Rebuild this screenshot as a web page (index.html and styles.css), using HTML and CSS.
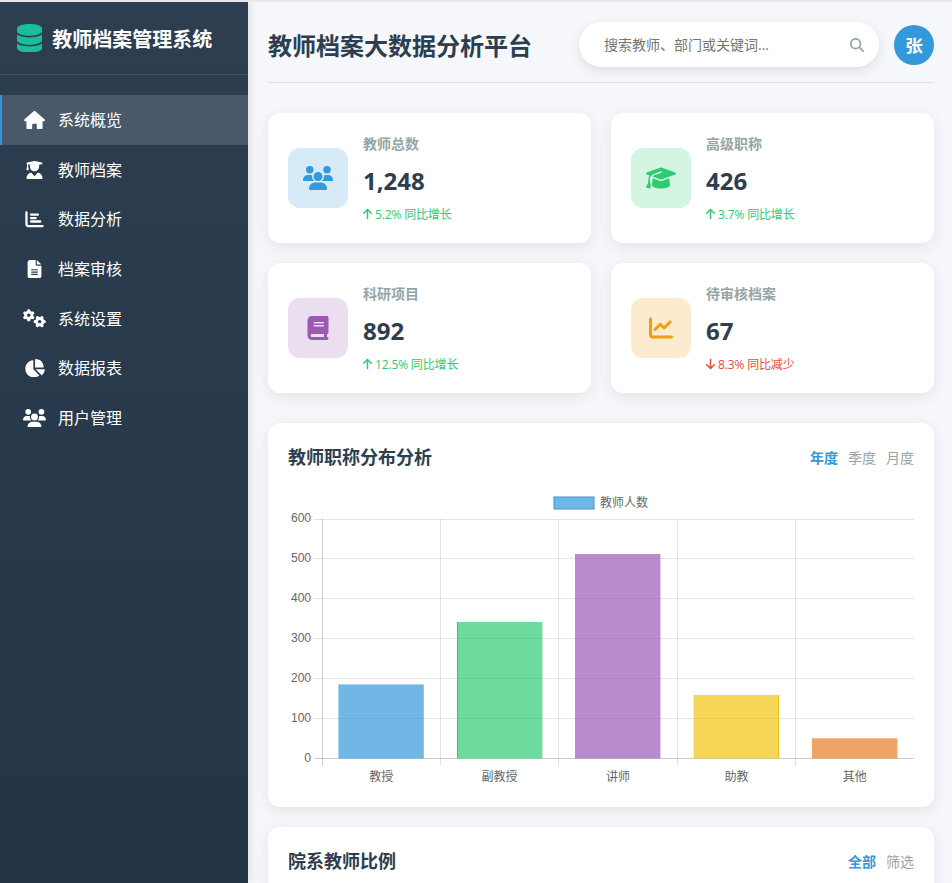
FILE: index.html
```html
<!DOCTYPE html>
<html lang="zh-CN">

<head>
    <meta charset="UTF-8">
    <meta name="viewport" content="width=device-width, initial-scale=1.0">
    <title>教师档案管理系统</title>
    <link rel="stylesheet" href="styles.css">
</head>

<body>
    <svg class="sprite" xmlns="http://www.w3.org/2000/svg">
        <symbol id="i-users" viewBox="0 0 640 512"><path d="M144 0a80 80 0 1 1 0 160A80 80 0 1 1 144 0zM512 0a80 80 0 1 1 0 160A80 80 0 1 1 512 0zM0 298.7C0 239.8 47.8 192 106.7 192h42.7c15.9 0 31 3.5 44.6 9.7c-1.3 7.2-1.9 14.7-1.9 22.3c0 38.2 16.8 72.5 43.3 96c-.2 0-.4 0-.7 0H21.3C9.6 320 0 310.4 0 298.7zM405.3 320c-.2 0-.4 0-.7 0c26.6-23.5 43.3-57.8 43.3-96c0-7.6-.7-15-1.9-22.3c13.6-6.3 28.7-9.7 44.6-9.7h42.7C592.2 192 640 239.8 640 298.7c0 11.8-9.6 21.3-21.3 21.3H405.3zM224 224a96 96 0 1 1 192 0 96 96 0 1 1 -192 0zM128 485.3C128 411.7 187.7 352 261.3 352H378.7C452.3 352 512 411.7 512 485.3c0 14.7-11.9 26.7-26.7 26.7H154.7c-14.7 0-26.7-11.9-26.7-26.7z"/></symbol>
        <symbol id="i-up" viewBox="0 0 384 512"><path d="M214.6 41.4c-12.5-12.5-32.8-12.5-45.3 0l-160 160c-12.5 12.5-12.5 32.8 0 45.3s32.8 12.5 45.3 0L160 141.2V448c0 17.7 14.3 32 32 32s32-14.3 32-32V141.2L329.4 246.6c12.5 12.5 32.8 12.5 45.3 0s12.5-32.8 0-45.3l-160-160z"/></symbol>
        <symbol id="i-down" viewBox="0 0 384 512"><path d="M169.4 470.6c12.5 12.5 32.8 12.5 45.3 0l160-160c12.5-12.5 12.5-32.8 0-45.3s-32.8-12.5-45.3 0L224 370.8 224 64c0-17.7-14.3-32-32-32s-32 14.3-32 32l0 306.7L54.6 265.4c-12.5-12.5-32.8-12.5-45.3 0s-12.5 32.8 0 45.3l160 160z"/></symbol>
    </svg>

    <aside class="sidebar">
        <div class="logo">
            <svg class="logo-icon" viewBox="0 0 448 512"><path d="M448 80v48c0 44.2-100.3 80-224 80S0 172.2 0 128V80C0 35.8 100.3 0 224 0S448 35.8 448 80zM393.2 214.7c20.8-7.4 39.9-16.9 54.8-28.6V288c0 44.2-100.3 80-224 80S0 332.2 0 288V186.1c14.9 11.8 34 21.2 54.8 28.6C99.7 230.7 159.5 240 224 240s124.3-9.3 169.2-25.3zM0 346.1c14.9 11.8 34 21.2 54.8 28.6C99.7 390.7 159.5 400 224 400s124.3-9.3 169.2-25.3c20.8-7.4 39.9-16.9 54.8-28.6V432c0 44.2-100.3 80-224 80S0 476.2 0 432V346.1z"/></svg>
            <span>教师档案管理系统</span>
        </div>
        <nav class="nav">
            <a class="nav-item active">
                <span class="nav-icon"><svg viewBox="0 0 576 512"><path d="M575.8 255.5c0 18-15 32.1-32 32.1h-32l.7 160.2c0 2.7-.2 5.4-.5 8.1V472c0 22.1-17.9 40-40 40H456c-1.1 0-2.2 0-3.3-.1c-1.4 .1-2.8 .1-4.2 .1H416 392c-22.1 0-40-17.9-40-40V448 384c0-17.7-14.3-32-32-32H256c-17.7 0-32 14.3-32 32v64 24c0 22.1-17.9 40-40 40H160 128.1c-1.5 0-3-.1-4.5-.2c-1.2 .1-2.4 .2-3.6 .2H104c-22.1 0-40-17.9-40-40V360c0-.9 0-1.9 .1-2.8V287.6H32c-18 0-32-14-32-32.1c0-9 3-17 10-24L266.4 8c7-7 15-8 22-8s15 2 21 7L564.8 231.5c8 7 12 15 11 24z"/></svg></span>
                <span class="nav-text">系统概览</span>
            </a>
            <a class="nav-item">
                <span class="nav-icon"><svg viewBox="0 0 448 512"><path d="M219.3 .5c3.1-.6 6.3-.6 9.4 0l200 40C439.9 42.7 448 52.6 448 64s-8.1 21.3-19.3 23.5L352 102.9V160c0 70.7-57.3 128-128 128s-128-57.3-128-128V102.9L48 93.3v65.1l15.7 78.4c.9 4.7-.3 9.6-3.3 13.3s-7.6 5.9-12.4 5.9H16c-4.8 0-9.3-2.1-12.4-5.9s-4.3-8.6-3.3-13.3L16 158.4V86.6C6.5 83.3 0 74.3 0 64C0 52.6 8.1 42.7 19.3 40.5l200-40zM111.9 327.7c10.5-3.4 21.8 .4 29.4 8.5l71 75.5c6.3 6.7 17 6.7 23.3 0l71-75.5c7.6-8.1 18.9-11.9 29.4-8.5C401 348.6 448 409.4 448 481.3c0 17-13.8 30.7-30.7 30.7H30.7C13.8 512 0 498.2 0 481.3c0-71.9 47-132.7 111.9-153.6z"/></svg></span>
                <span class="nav-text">教师档案</span>
            </a>
            <a class="nav-item">
                <span class="nav-icon"><svg viewBox="0 0 512 512"><path d="M32 32c17.7 0 32 14.3 32 32V400c0 8.8 7.2 16 16 16H480c17.7 0 32 14.3 32 32s-14.3 32-32 32H80c-44.2 0-80-35.8-80-80V64C0 46.3 14.3 32 32 32zm96 96c0-17.7 14.3-32 32-32l192 0c17.7 0 32 14.3 32 32s-14.3 32-32 32l-192 0c-17.7 0-32-14.3-32-32zm32 64H288c17.7 0 32 14.3 32 32s-14.3 32-32 32H160c-17.7 0-32-14.3-32-32s14.3-32 32-32zm0 96H416c17.7 0 32 14.3 32 32s-14.3 32-32 32H160c-17.7 0-32-14.3-32-32s14.3-32 32-32z"/></svg></span>
                <span class="nav-text">数据分析</span>
            </a>
            <a class="nav-item">
                <span class="nav-icon"><svg viewBox="0 0 384 512"><path d="M64 0C28.7 0 0 28.7 0 64V448c0 35.3 28.7 64 64 64H320c35.3 0 64-28.7 64-64V160H256c-17.7 0-32-14.3-32-32V0H64zM256 0V128H384L256 0zM112 256H272c8.8 0 16 7.2 16 16s-7.2 16-16 16H112c-8.8 0-16-7.2-16-16s7.2-16 16-16zm0 64H272c8.8 0 16 7.2 16 16s-7.2 16-16 16H112c-8.8 0-16-7.2-16-16s7.2-16 16-16zm0 64H272c8.8 0 16 7.2 16 16s-7.2 16-16 16H112c-8.8 0-16-7.2-16-16s7.2-16 16-16z"/></svg></span>
                <span class="nav-text">档案审核</span>
            </a>
            <a class="nav-item">
                <span class="nav-icon"><svg viewBox="0 0 640 512"><path d="M308.5 135.3c7.1-6.3 9.9-16.2 6.2-25c-2.3-5.3-4.8-10.5-7.6-15.5L304 89.4c-3-5-6.3-9.9-9.8-14.6c-5.7-7.6-15.7-10.1-24.7-7.1l-28.2 9.3c-10.7-8.8-23-16-36.2-20.9L199 27.1c-1.9-9.3-9.1-16.7-18.5-17.8C173.9 8.4 167.2 8 160.4 8h-.7c-6.8 0-13.5 .4-20.1 1.2c-9.4 1.1-16.6 8.6-18.5 17.8L115 56.1c-13.3 5-25.5 12.1-36.2 20.9L50.5 67.8c-9-3-19-.5-24.7 7.1c-3.5 4.7-6.8 9.6-9.9 14.6l-3 5.3c-2.8 5-5.3 10.2-7.6 15.6c-3.7 8.7-.9 18.6 6.2 25l22.2 19.8C32.6 161.9 32 168.9 32 176s.6 14.1 1.7 20.9L11.5 216.7c-7.1 6.3-9.9 16.2-6.2 25c2.3 5.3 4.8 10.5 7.6 15.6l3 5.2c3 5.1 6.3 9.9 9.9 14.6c5.7 7.6 15.7 10.1 24.7 7.1l28.2-9.3c10.7 8.8 23 16 36.2 20.9l6.1 29.1c1.9 9.3 9.1 16.7 18.5 17.8c6.7 .8 13.5 1.2 20.4 1.2s13.7-.4 20.4-1.2c9.4-1.1 16.6-8.6 18.5-17.8l6.1-29.1c13.3-5 25.5-12.1 36.2-20.9l28.2 9.3c9 3 19 .5 24.7-7.1c3.5-4.7 6.8-9.5 9.8-14.6l3.1-5.4c2.8-5 5.3-10.2 7.6-15.5c3.7-8.7 .9-18.6-6.2-25l-22.2-19.8c1.1-6.8 1.7-13.8 1.7-20.9s-.6-14.1-1.7-20.9l22.2-19.8zM112 176a48 48 0 1 1 96 0 48 48 0 1 1 -96 0zM504.7 500.5c6.3 7.1 16.2 9.9 25 6.2c5.3-2.3 10.5-4.8 15.5-7.6l5.4-3.1c5-3 9.9-6.3 14.6-9.8c7.6-5.7 10.1-15.7 7.1-24.7l-9.3-28.2c8.8-10.7 16-23 20.9-36.2l29.1-6.1c9.3-1.9 16.7-9.1 17.8-18.5c.8-6.7 1.2-13.5 1.2-20.4s-.4-13.7-1.2-20.4c-1.1-9.4-8.6-16.6-17.8-18.5L583.9 307c-5-13.3-12.1-25.5-20.9-36.2l9.3-28.2c3-9 .5-19-7.1-24.7c-4.7-3.5-9.6-6.8-14.6-9.9l-5.3-3c-5-2.8-10.2-5.3-15.6-7.6c-8.7-3.7-18.6-.9-25 6.2l-19.8 22.2c-6.8-1.1-13.8-1.7-20.9-1.7s-14.1 .6-20.9 1.7l-19.8-22.2c-6.3-7.1-16.2-9.9-25-6.2c-5.3 2.3-10.5 4.8-15.6 7.6l-5.2 3c-5.1 3-9.9 6.3-14.6 9.9c-7.6 5.7-10.1 15.7-7.1 24.7l9.3 28.2c-8.8 10.7-16 23-20.9 36.2L315.1 313c-9.3 1.9-16.7 9.1-17.8 18.5c-.8 6.7-1.2 13.5-1.2 20.4s.4 13.7 1.2 20.4c1.1 9.4 8.6 16.6 17.8 18.5l29.1 6.1c5 13.3 12.1 25.5 20.9 36.2l-9.3 28.2c-3 9-.5 19 7.1 24.7c4.7 3.5 9.5 6.8 14.6 9.8l5.4 3.1c5 2.8 10.2 5.3 15.5 7.6c8.7 3.7 18.6 .9 25-6.2l19.8-22.2c6.8 1.1 13.8 1.7 20.9 1.7s14.1-.6 20.9-1.7l19.8 22.2zM464 304a48 48 0 1 1 0 96 48 48 0 1 1 0-96z"/></svg></span>
                <span class="nav-text">系统设置</span>
            </a>
            <a class="nav-item">
                <span class="nav-icon"><svg viewBox="0 0 576 512"><path d="M304 240V16.6c0-9 7-16.6 16-16.6C443.7 0 544 100.3 544 224c0 9-7.6 16-16.6 16H304zM32 272C32 150.7 122.1 50.3 239 34.3c9.2-1.3 17 6.1 17 15.4V288L412.5 444.5c6.7 6.7 6.2 17.7-1.5 23.1C371.8 495.6 323.8 512 272 512C139.5 512 32 404.6 32 272zm526.4 16c9.3 0 16.6 7.8 15.4 17c-7.7 55.9-34.6 105.6-73.9 142.3c-6 5.6-15.4 5.2-21.2-.7L320 288H558.4z"/></svg></span>
                <span class="nav-text">数据报表</span>
            </a>
            <a class="nav-item">
                <span class="nav-icon"><svg><use href="#i-users"/></svg></span>
                <span class="nav-text">用户管理</span>
            </a>
        </nav>
    </aside>

    <main class="main">
        <header class="header">
            <h1>教师档案大数据分析平台</h1>
            <div class="search">
                <input type="text" placeholder="搜索教师、部门或关键词...">
                <svg class="search-icon" viewBox="0 0 512 512"><path d="M416 208c0 45.9-14.9 88.3-40 122.7L502.6 457.4c12.5 12.5 12.5 32.8 0 45.3s-32.8 12.5-45.3 0L330.7 376c-34.4 25.2-76.8 40-122.7 40C93.1 416 0 322.9 0 208S93.1 0 208 0S416 93.1 416 208zM208 352a144 144 0 1 0 0-288 144 144 0 1 0 0 288z"/></svg>
            </div>
            <div class="avatar">张</div>
        </header>

        <section class="stats">
            <div class="stat-card">
                <div class="stat-icon blue"><svg><use href="#i-users"/></svg></div>
                <div class="stat-info">
                    <div class="stat-label">教师总数</div>
                    <div class="stat-value">1,248</div>
                    <div class="stat-trend up"><svg><use href="#i-up"/></svg> 5.2% 同比增长</div>
                </div>
            </div>
            <div class="stat-card">
                <div class="stat-icon green"><svg viewBox="0 0 640 512"><path d="M320 32c-8.1 0-16.1 1.4-23.7 4.1L15.8 137.4C6.3 140.9 0 149.9 0 160s6.3 19.1 15.8 22.6l57.9 20.9C57.3 229.3 48 259.8 48 291.9v28.1c0 28.4-10.8 57.7-22.3 80.8c-6.5 13-13.9 25.8-22.5 37.6C0 442.7-.9 448.3 .9 453.4s6 8.9 11.2 10.2l64 16c4.2 1.1 8.7 .3 12.4-2s6.3-6.1 7.1-10.4c8.6-42.8 4.3-81.2-2.1-108.7C90.3 344.3 86 329.8 80 316.5V291.9c0-30.2 10.2-58.7 27.9-81.5c12.9-15.5 29.6-28 49.2-35.7l157-61.7c8.2-3.2 17.5 .8 20.7 9s-.8 17.5-9 20.7l-157 61.7c-12.4 4.9-23.3 12.4-32.2 21.6l159.6 57.6c7.6 2.7 15.6 4.1 23.7 4.1s16.1-1.4 23.7-4.1L624.2 182.6c9.5-3.4 15.8-12.5 15.8-22.6s-6.3-19.1-15.8-22.6L343.7 36.1C336.1 33.4 328.1 32 320 32zM128 408c0 35.3 86 72 192 72s192-36.7 192-72L496.7 262.6 354.5 314c-11.1 4-22.8 6-34.5 6s-23.5-2-34.5-6L143.3 262.6 128 408z"/></svg></div>
                <div class="stat-info">
                    <div class="stat-label">高级职称</div>
                    <div class="stat-value">426</div>
                    <div class="stat-trend up"><svg><use href="#i-up"/></svg> 3.7% 同比增长</div>
                </div>
            </div>
            <div class="stat-card">
                <div class="stat-icon purple"><svg viewBox="0 0 448 512"><path d="M96 0C43 0 0 43 0 96V416c0 53 43 96 96 96H384h32c17.7 0 32-14.3 32-32s-14.3-32-32-32V384c17.7 0 32-14.3 32-32V32c0-17.7-14.3-32-32-32H384 96zm0 384H352v64H96c-17.7 0-32-14.3-32-32s14.3-32 32-32zm32-240c0-8.8 7.2-16 16-16H336c8.8 0 16 7.2 16 16s-7.2 16-16 16H144c-8.8 0-16-7.2-16-16zm16 48H336c8.8 0 16 7.2 16 16s-7.2 16-16 16H144c-8.8 0-16-7.2-16-16s7.2-16 16-16z"/></svg></div>
                <div class="stat-info">
                    <div class="stat-label">科研项目</div>
                    <div class="stat-value">892</div>
                    <div class="stat-trend up"><svg><use href="#i-up"/></svg> 12.5% 同比增长</div>
                </div>
            </div>
            <div class="stat-card">
                <div class="stat-icon orange"><svg viewBox="0 0 512 512"><path d="M64 64c0-17.7-14.3-32-32-32S0 46.3 0 64V400c0 44.2 35.8 80 80 80H480c17.7 0 32-14.3 32-32s-14.3-32-32-32H80c-8.8 0-16-7.2-16-16V64zm406.6 86.6c12.5-12.5 12.5-32.8 0-45.3s-32.8-12.5-45.3 0L320 210.7l-57.4-57.4c-12.5-12.5-32.8-12.5-45.3 0l-112 112c-12.5 12.5-12.5 32.8 0 45.3s32.8 12.5 45.3 0L240 221.3l57.4 57.4c12.5 12.5 32.8 12.5 45.3 0l128-128z"/></svg></div>
                <div class="stat-info">
                    <div class="stat-label">待审核档案</div>
                    <div class="stat-value">67</div>
                    <div class="stat-trend down"><svg><use href="#i-down"/></svg> 8.3% 同比减少</div>
                </div>
            </div>
        </section>

        <section class="panel">
            <div class="panel-head">
                <h2>教师职称分布分析</h2>
                <div class="tabs">
                    <span class="tab active">年度</span>
                    <span class="tab">季度</span>
                    <span class="tab">月度</span>
                </div>
            </div>
            <svg class="chart" viewBox="288 487 626 300">
                <rect class="legend-box" x="554" y="497" width="40" height="12"/>
                <text class="legend-text" x="600" y="507">教师人数</text>

                <path class="grid" d="M314 519.5H914M314 558.5H914M314 598.5H914M314 638.5H914M314 678.5H914M314 718.5H914"/>
                <path class="grid" d="M440.5 519V766M558.5 519V766M677.5 519V766M795.5 519V766"/>
                <path class="axis" d="M322.5 519V766M314 758.5H914"/>

                <text class="y-label" x="311" y="522">600</text>
                <text class="y-label" x="311" y="562">500</text>
                <text class="y-label" x="311" y="602">400</text>
                <text class="y-label" x="311" y="642">300</text>
                <text class="y-label" x="311" y="682">200</text>
                <text class="y-label" x="311" y="722">100</text>
                <text class="y-label" x="311" y="762">0</text>

                <rect class="bar bar-blue" x="338.4" y="684.4" width="85.4" height="74.1"/>
                <rect class="bar bar-green" x="457" y="622" width="85.4" height="136.5"/>
                <path class="edge-green" d="M457.5 622V758"/>
                <rect class="bar bar-purple" x="575" y="554" width="85.4" height="204.5"/>
                <rect class="bar bar-yellow" x="693.6" y="695" width="85.4" height="63.5"/>
                <path class="edge-yellow" d="M778.5 695V758"/>
                <rect class="bar bar-orange" x="812" y="738.3" width="85.4" height="20.2"/>

                <text class="x-label" x="381.2" y="781">教授</text>
                <text class="x-label" x="499.6" y="781">副教授</text>
                <text class="x-label" x="618" y="781">讲师</text>
                <text class="x-label" x="736.4" y="781">助教</text>
                <text class="x-label" x="854.8" y="781">其他</text>
            </svg>
        </section>

        <section class="panel panel-next">
            <div class="panel-head">
                <h2>院系教师比例</h2>
                <div class="tabs">
                    <span class="tab active">全部</span>
                    <span class="tab">筛选</span>
                </div>
            </div>
        </section>
    </main>
</body>

</html>
```

FILE: styles.css
```css
* {
    box-sizing: border-box;
}

body {
    display: flex;
    height: 100vh;
    margin: 0;
    overflow: hidden;
    border-top: 2px solid #e8e8e8;
    background-color: #f5f7fb;
    color: #2c3e50;
    font-family: 'Open Sans', 'Noto Sans CJK SC', sans-serif;
}

.sprite {
    display: none;
}

svg {
    fill: currentColor;
}

/* sidebar */
.sidebar {
    flex: 0 0 248px;
    background: linear-gradient(180deg, #2c3e50, #233446);
    color: #fff;
    box-shadow: 2px 0 10px rgba(0, 0, 0, 0.1);
}

.logo {
    display: flex;
    align-items: center;
    gap: 10px;
    height: 73px;
    padding: 0 17px 0;
    border-bottom: 1px solid rgba(255, 255, 255, 0.1);
    font-size: 20px;
    font-weight: 700;
}

.logo-icon {
    width: 25.2px;
    height: 28.8px;
    color: #1abc9c;
}

.nav {
    padding-top: 20px;
}

.nav-item {
    display: flex;
    align-items: center;
    height: 49.6px;
    padding-left: 20px;
    border-left: 2px solid transparent;
    font-size: 16px;
}

.nav-item.active {
    height: 50px;
    border-left-color: #3498db;
    background-color: rgba(255, 255, 255, 0.15);
}

.nav-icon {
    display: flex;
    justify-content: center;
    width: 25px;
    margin-right: 11px;
}

.nav-icon svg {
    width: 23px;
    height: 18.4px;
}

.nav-text {
    margin-bottom: 2px;
}

/* main area */
.main {
    flex: 1;
    min-width: 0;
    padding: 20px 18px 0 20px;
}

.header {
    display: flex;
    align-items: center;
    padding-bottom: 15px;
    margin-bottom: 30px;
    border-bottom: 1px solid #e0e0e0;
}

.header h1 {
    flex: 1;
    margin: 0;
    font-size: 24px;
    font-weight: 700;
}

.search {
    position: relative;
    width: 300px;
    height: 45px;
    margin-right: 15px;
}

.search input {
    width: 100%;
    height: 100%;
    padding: 0 45px 0 25px;
    border: none;
    outline: none;
    border-radius: 23px;
    background-color: #fff;
    box-shadow: 0 4px 12px rgba(0, 0, 0, 0.1);
    font-family: inherit;
    font-size: 14px;
}

.search-icon {
    position: absolute;
    top: 16px;
    right: 15px;
    width: 14px;
    height: 14px;
    color: #95a5a6;
}

.avatar {
    display: flex;
    align-items: center;
    justify-content: center;
    width: 40px;
    height: 40px;
    border-radius: 50%;
    background-color: #3498db;
    color: #fff;
    font-size: 17.6px;
    font-weight: 700;
}

/* stat cards */
.stats {
    display: grid;
    grid-template-columns: repeat(2, 1fr);
    gap: 20px;
    margin-bottom: 30px;
}

.stat-card {
    display: flex;
    align-items: center;
    height: 130px;
    padding: 0 20px;
    border-radius: 12px;
    background-color: #fff;
    box-shadow: 0 4px 15px rgba(0, 0, 0, 0.08);
}

.stat-icon {
    display: flex;
    align-items: center;
    justify-content: center;
    width: 60px;
    height: 60px;
    margin-right: 15px;
    border-radius: 12px;
}

.stat-icon svg {
    width: 30px;
    height: 24px;
}

.blue {
    background-color: rgba(52, 152, 219, 0.2);
    color: #3498db;
}

.green {
    background-color: rgba(46, 204, 113, 0.2);
    color: #2ecc71;
}

.purple {
    background-color: rgba(155, 89, 182, 0.2);
    color: #9b59b6;
}

.orange {
    background-color: rgba(243, 156, 18, 0.2);
    color: #f39c12;
}

.stat-label {
    margin-bottom: 9px;
    color: #95a5a6;
    font-size: 14px;
    font-weight: 700;
    line-height: 20px;
}

.stat-value {
    margin-bottom: 8px;
    font-size: 24px;
    font-weight: 700;
    line-height: 35px;
}

.stat-trend {
    display: flex;
    align-items: center;
    gap: 3px;
    font-size: 12px;
    line-height: 17px;
    letter-spacing: -0.15px;
}

.stat-trend svg {
    width: 9px;
    height: 12px;
}

.up {
    color: #2ecc71;
}

.down {
    color: #e74c3c;
}

/* chart panels */
.panel {
    padding: 20px;
    margin-bottom: 20px;
    border-radius: 12px;
    background-color: #fff;
    box-shadow: 0 4px 15px rgba(0, 0, 0, 0.08);
}

.panel-next {
    min-height: 300px;
}

.panel-head {
    display: flex;
    align-items: center;
    justify-content: space-between;
    height: 28px;
    margin-bottom: 16px;
}

.panel-head h2 {
    margin: 0 0 2px;
    font-size: 18px;
    font-weight: 700;
}

.tabs {
    display: flex;
    gap: 10px;
}

.tab {
    color: #95a5a6;
    font-size: 14px;
}

.tab.active {
    color: #3498db;
    font-weight: 700;
}

.chart {
    display: block;
    width: 626px;
    height: 300px;
}

.chart text {
    fill: #666;
    font-family: 'Liberation Sans', 'Noto Sans CJK SC', sans-serif;
    font-size: 12px;
}

.chart .y-label {
    text-anchor: end;
}

.chart .x-label {
    text-anchor: middle;
}

.grid {
    fill: none;
    stroke: rgba(0, 0, 0, 0.1);
}

.axis {
    fill: none;
    stroke: rgba(0, 0, 0, 0.2);
}

.legend-box {
    fill: rgba(52, 152, 219, 0.7);
    stroke: #3498db;
}

.bar-blue {
    fill: rgba(52, 152, 219, 0.7);
}

.bar-green {
    fill: rgba(46, 204, 113, 0.7);
}

.bar-purple {
    fill: rgba(155, 89, 182, 0.7);
}

.bar-yellow {
    fill: rgba(241, 196, 15, 0.7);
}

.bar-orange {
    fill: rgba(230, 126, 34, 0.7);
}

.edge-green {
    fill: none;
    stroke: #2ecc71;
}

.edge-yellow {
    fill: none;
    stroke: #f1c40f;
}
```
